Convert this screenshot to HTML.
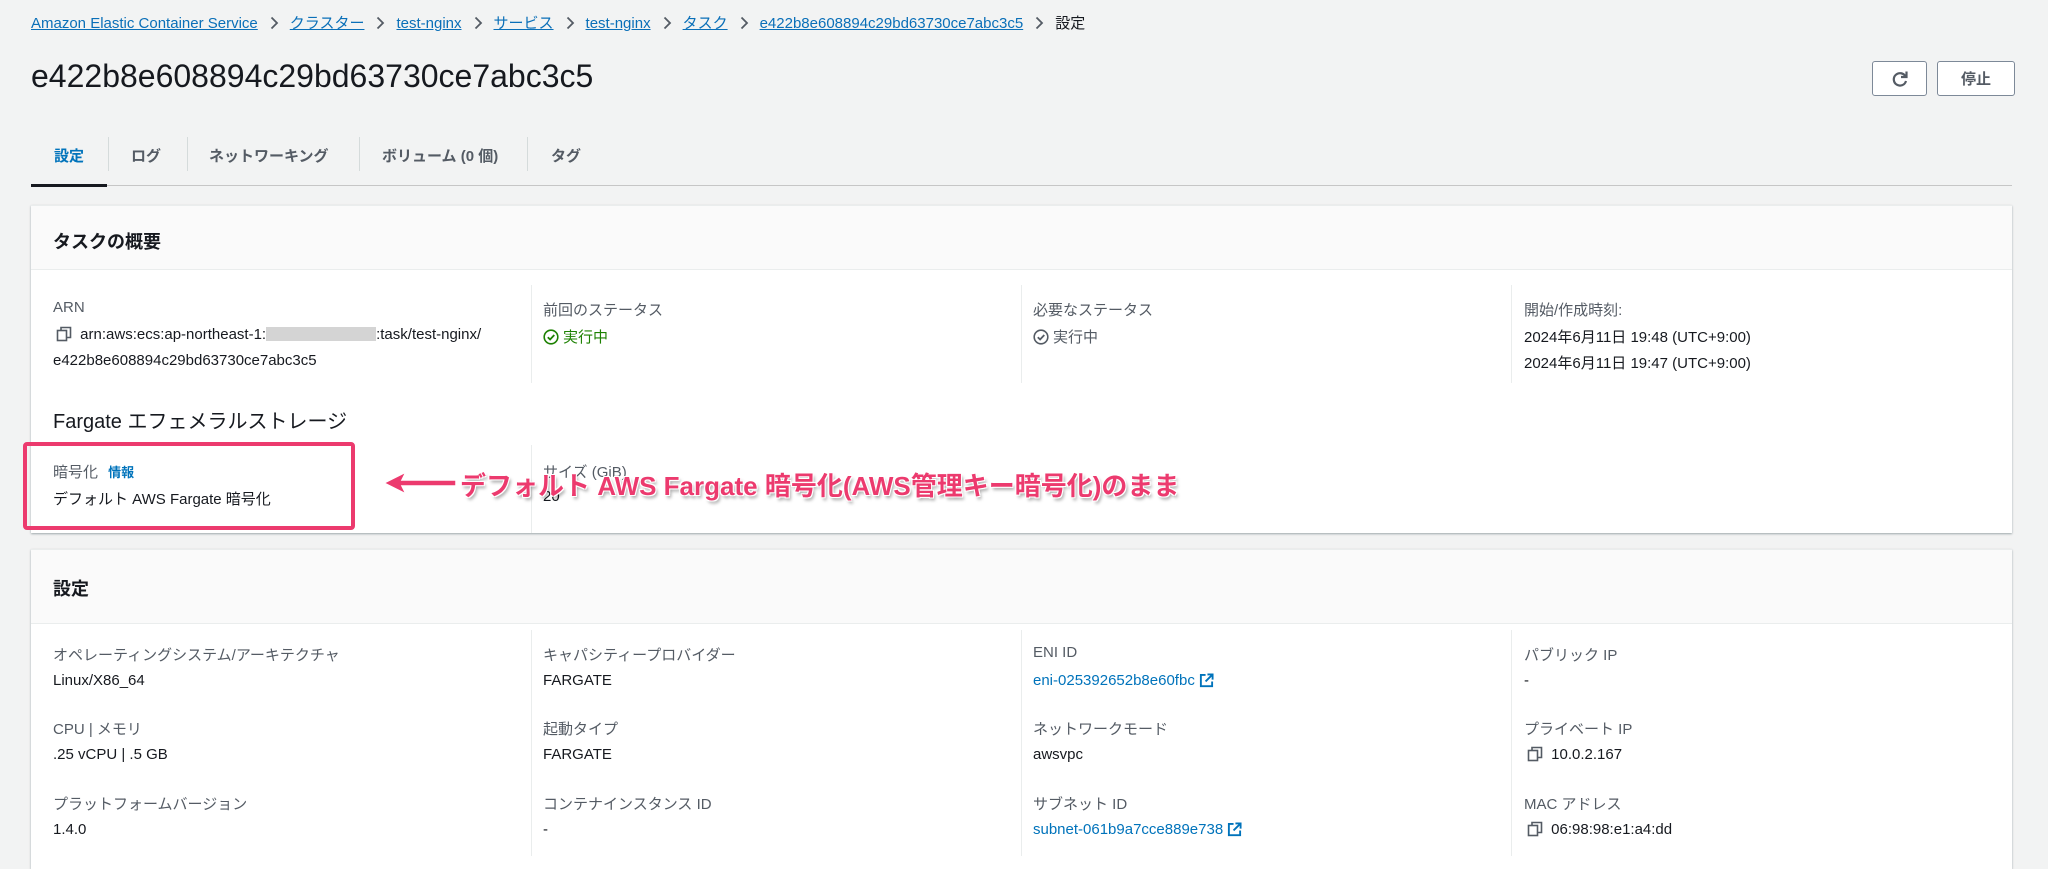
<!DOCTYPE html>
<html><head><meta charset="utf-8"><style>
*{box-sizing:border-box;margin:0;padding:0}
body{width:2048px;height:856px;overflow:hidden;background:#f2f3f3;font-family:"Liberation Sans","Noto Sans CJK JP",sans-serif;color:#16191f;position:relative;font-size:15px}
.a{position:absolute;white-space:nowrap}
.bc a{color:#0a6fb8;text-decoration:underline;text-decoration-color:#0a6fb8}
.bc{top:12px;left:31px;font-size:15px;color:#16191f}
.bc svg{margin:0 11px 0 12px;vertical-align:-2px}
.title{top:58px;left:31px;font-size:32px}
.btn{position:absolute;top:61px;height:35px;border:1px solid #7d8998;border-radius:3px;background:#fff;display:flex;align-items:center;justify-content:center;font-weight:bold;color:#545b64;font-size:15px}
.tabs{top:145px;left:31px;font-size:15px;font-weight:bold;color:#545b64}
.panel{position:absolute;left:31px;width:1981px;background:#fff;box-shadow:0 1px 2px rgba(0,28,36,.35);border-top:1px solid #eaeded}
.head{height:64px;background:#fafafa;border-bottom:1px solid #eaeded;position:relative}
.head div{position:absolute;left:22px;top:22px;font-size:18px;font-weight:bold}
.lbl{color:#545b64;font-size:15px}
.val{font-size:15px}
.lnk{color:#0073bb}
.sep{position:absolute;width:1px;background:#eaeded}
.ck{display:inline-block;vertical-align:-3px;margin-right:4px}
</style></head><body>
<div class="a bc"><a>Amazon Elastic Container Service</a><svg width="9" height="14" viewBox="0 0 9 14"><path d="M1.5 1.5L7 7l-5.5 5.5" fill="none" stroke="#545b64" stroke-width="1.8"/></svg><a>クラスター</a><svg width="9" height="14" viewBox="0 0 9 14"><path d="M1.5 1.5L7 7l-5.5 5.5" fill="none" stroke="#545b64" stroke-width="1.8"/></svg><a>test-nginx</a><svg width="9" height="14" viewBox="0 0 9 14"><path d="M1.5 1.5L7 7l-5.5 5.5" fill="none" stroke="#545b64" stroke-width="1.8"/></svg><a>サービス</a><svg width="9" height="14" viewBox="0 0 9 14"><path d="M1.5 1.5L7 7l-5.5 5.5" fill="none" stroke="#545b64" stroke-width="1.8"/></svg><a>test-nginx</a><svg width="9" height="14" viewBox="0 0 9 14"><path d="M1.5 1.5L7 7l-5.5 5.5" fill="none" stroke="#545b64" stroke-width="1.8"/></svg><a>タスク</a><svg width="9" height="14" viewBox="0 0 9 14"><path d="M1.5 1.5L7 7l-5.5 5.5" fill="none" stroke="#545b64" stroke-width="1.8"/></svg><a>e422b8e608894c29bd63730ce7abc3c5</a><svg width="9" height="14" viewBox="0 0 9 14"><path d="M1.5 1.5L7 7l-5.5 5.5" fill="none" stroke="#545b64" stroke-width="1.8"/></svg>設定</div>
<div class="a title">e422b8e608894c29bd63730ce7abc3c5</div>
<div class="btn" style="left:1872px;width:55px"><svg width="20" height="20" viewBox="0 0 20 20"><path d="M15.5 7.5A6.2 6.2 0 1 0 16 12" fill="none" stroke="#545b64" stroke-width="2.2"/><path d="M16.5 2.5v5.5h-5.5" fill="none" stroke="#545b64" stroke-width="2.2"/></svg></div>
<div class="btn" style="left:1937px;width:78px">停止</div>
<div class="a tabs" style="top:145px;left:54px;color:#0073bb">設定</div>
<div class="a tabs" style="left:131px">ログ</div>
<div class="a tabs" style="left:209px">ネットワーキング</div>
<div class="a tabs" style="left:382px">ボリューム (0 個)</div>
<div class="a tabs" style="left:551px">タグ</div>
<div class="sep" style="left:108px;top:137px;height:34px;background:#d5dbdb"></div>
<div class="sep" style="left:187px;top:137px;height:34px;background:#d5dbdb"></div>
<div class="sep" style="left:359px;top:137px;height:34px;background:#d5dbdb"></div>
<div class="sep" style="left:527px;top:137px;height:34px;background:#d5dbdb"></div>
<div class="a" style="left:31px;top:185px;width:1981px;height:1px;background:#c6c6c6"></div>
<div class="a" style="left:31px;top:184px;width:76px;height:3px;background:#16191f"></div>

<div class="panel" style="top:205px;height:328px">
<div class="head"><div>タスクの概要</div></div>
</div>
<div class="sep" style="left:531px;top:285px;height:98px"></div>
<div class="sep" style="left:1021px;top:285px;height:98px"></div>
<div class="sep" style="left:1511px;top:285px;height:98px"></div>
<div class="a lbl" style="left:53px;top:299px">ARN</div>
<div class="a val" style="left:56px;top:326px"><svg class="ck" width="16" height="16" viewBox="0 0 16 16"><rect x="1.5" y="4.5" width="9" height="10" fill="none" stroke="#545b64" stroke-width="1.6"/><path d="M5 4.5V1.5h9.5v10H10.5" fill="none" stroke="#545b64" stroke-width="1.6"/></svg> arn:aws:ecs:ap-northeast-1:<span style="display:inline-block;width:110px;height:14px;background:#d4d4d4;vertical-align:-2px"></span>:task/test-nginx/</div>
<div class="a val" style="left:53px;top:352px">e422b8e608894c29bd63730ce7abc3c5</div>
<div class="a lbl" style="left:543px;top:299px">前回のステータス</div>
<div class="a val" style="left:543px;top:326px;color:#1d8102"><svg class="ck" width="16" height="16" viewBox="0 0 16 16"><circle cx="8" cy="8" r="6.8" fill="none" stroke="#1d8102" stroke-width="1.6"/><path d="M4.8 8.2l2.3 2.3 4.2-4.5" fill="none" stroke="#1d8102" stroke-width="1.8"/></svg>実行中</div>
<div class="a lbl" style="left:1033px;top:299px">必要なステータス</div>
<div class="a val" style="left:1033px;top:326px;color:#545b64"><svg class="ck" width="16" height="16" viewBox="0 0 16 16"><circle cx="8" cy="8" r="6.8" fill="none" stroke="#545b64" stroke-width="1.6"/><path d="M4.8 8.2l2.3 2.3 4.2-4.5" fill="none" stroke="#545b64" stroke-width="1.8"/></svg>実行中</div>
<div class="a lbl" style="left:1524px;top:299px">開始/作成時刻:</div>
<div class="a val" style="left:1524px;top:326px">2024年6月11日 19:48 (UTC+9:00)</div>
<div class="a val" style="left:1524px;top:352px">2024年6月11日 19:47 (UTC+9:00)</div>
<div class="a" style="left:53px;top:405px;font-size:20px">Fargate エフェメラルストレージ</div>
<div class="sep" style="left:531px;top:445px;height:88px"></div>
<div class="a lbl" style="left:53px;top:461px">暗号化 <span style="color:#0073bb;font-weight:bold;font-size:13px;margin-left:6px">情報</span></div>
<div class="a val" style="left:53px;top:488px">デフォルト AWS Fargate 暗号化</div>
<div class="a lbl" style="left:543px;top:461px">サイズ (GiB)</div>
<div class="a val" style="left:543px;top:488px">20</div>
<div class="a" style="left:23px;top:442px;width:332px;height:88px;border:4px solid #ec3a6e;border-radius:4px"></div>
<svg class="a" style="left:382px;top:468px" width="76" height="30" viewBox="0 0 76 30"><path d="M2 15L24 4 L20 12 H74 V18 H20 L24 26Z" fill="#ec3a6e" stroke="#fff" stroke-width="1.5"/></svg>
<div class="a" style="left:460px;top:466px;font-size:26px;font-weight:bold;color:#ec3a6e;text-shadow:1px 1px 0 #fff,-1px -1px 0 #fff,1px -1px 0 #fff,-1px 1px 0 #fff,2px 3px 3px rgba(0,0,0,.35)">デフォルト AWS Fargate 暗号化(AWS管理キー暗号化)のまま</div>

<div class="panel" style="top:549px;height:320px">
<div class="head" style="height:74px"><div style="top:25px">設定</div></div>
</div>
<div class="sep" style="left:531px;top:630px;height:226px"></div>
<div class="sep" style="left:1021px;top:630px;height:226px"></div>
<div class="sep" style="left:1511px;top:630px;height:226px"></div>

<div class="a lbl" style="left:53px;top:644px">オペレーティングシステム/アーキテクチャ</div>
<div class="a val" style="left:53px;top:672px">Linux/X86_64</div>
<div class="a lbl" style="left:53px;top:718px">CPU | メモリ</div>
<div class="a val" style="left:53px;top:746px">.25 vCPU | .5 GB</div>
<div class="a lbl" style="left:53px;top:793px">プラットフォームバージョン</div>
<div class="a val" style="left:53px;top:821px">1.4.0</div>

<div class="a lbl" style="left:543px;top:644px">キャパシティープロバイダー</div>
<div class="a val" style="left:543px;top:672px">FARGATE</div>
<div class="a lbl" style="left:543px;top:718px">起動タイプ</div>
<div class="a val" style="left:543px;top:746px">FARGATE</div>
<div class="a lbl" style="left:543px;top:793px">コンテナインスタンス ID</div>
<div class="a val" style="left:543px;top:821px">-</div>

<div class="a lbl" style="left:1033px;top:644px">ENI ID</div>
<div class="a val lnk" style="left:1033px;top:672px">eni-025392652b8e60fbc <svg class="ck" width="15" height="15" viewBox="0 0 16 16"><path d="M7 2H2v12h12V9" fill="none" stroke="#0073bb" stroke-width="2"/><path d="M9 1.5h5.5V7M14.5 1.5L7 9" fill="none" stroke="#0073bb" stroke-width="2"/></svg></div>
<div class="a lbl" style="left:1033px;top:718px">ネットワークモード</div>
<div class="a val" style="left:1033px;top:746px">awsvpc</div>
<div class="a lbl" style="left:1033px;top:793px">サブネット ID</div>
<div class="a val lnk" style="left:1033px;top:821px">subnet-061b9a7cce889e738 <svg class="ck" width="15" height="15" viewBox="0 0 16 16"><path d="M7 2H2v12h12V9" fill="none" stroke="#0073bb" stroke-width="2"/><path d="M9 1.5h5.5V7M14.5 1.5L7 9" fill="none" stroke="#0073bb" stroke-width="2"/></svg></div>

<div class="a lbl" style="left:1524px;top:644px">パブリック IP</div>
<div class="a val" style="left:1524px;top:672px">-</div>
<div class="a lbl" style="left:1524px;top:718px">プライベート IP</div>
<div class="a val" style="left:1527px;top:746px"><svg class="ck" width="16" height="16" viewBox="0 0 16 16"><rect x="1.5" y="4.5" width="9" height="10" fill="none" stroke="#545b64" stroke-width="1.6"/><path d="M5 4.5V1.5h9.5v10H10.5" fill="none" stroke="#545b64" stroke-width="1.6"/></svg> 10.0.2.167</div>
<div class="a lbl" style="left:1524px;top:793px">MAC アドレス</div>
<div class="a val" style="left:1527px;top:821px"><svg class="ck" width="16" height="16" viewBox="0 0 16 16"><rect x="1.5" y="4.5" width="9" height="10" fill="none" stroke="#545b64" stroke-width="1.6"/><path d="M5 4.5V1.5h9.5v10H10.5" fill="none" stroke="#545b64" stroke-width="1.6"/></svg> 06:98:98:e1:a4:dd</div>
</body></html>
